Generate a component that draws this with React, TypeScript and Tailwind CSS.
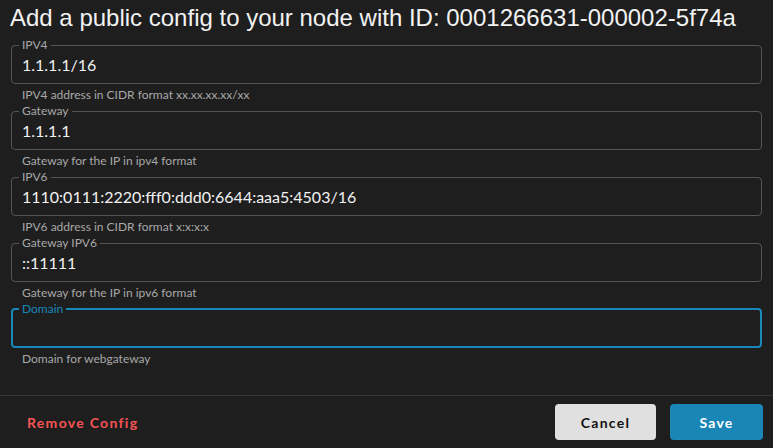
const fields = [
  { label: 'IPV4', value: '1.1.1.1/16', help: 'IPV4 address in CIDR format xx.xx.xx.xx/xx' },
  { label: 'Gateway', value: '1.1.1.1', help: 'Gateway for the IP in ipv4 format' },
  { label: 'IPV6', value: '1110:0111:2220:fff0:ddd0:6644:aaa5:4503/16', help: 'IPV6 address in CIDR format x:x:x:x' },
  { label: 'Gateway IPV6', value: '::11111', help: 'Gateway for the IP in ipv6 format' },
  { label: 'Domain', value: '', help: 'Domain for webgateway', focused: true },
]

function Field({ label, value, help, focused }: { label: string; value: string; help: string; focused?: boolean }) {
  return (
    <div className="mb-[3px]">
      <fieldset
        className={`rounded-[4px] ${
          focused ? 'border-2 border-[#1a87b9] px-[9px] pb-[7px]' : 'border border-[#555555] px-[10px] pb-[8px]'
        }`}>
        <legend
          className={`ml-[-3px] px-[3px] text-[12px] leading-[12px] ${focused ? 'text-[#1a87b9]' : 'text-[#a8a8a8]'}`}>
          {label}
        </legend>
        <input
          defaultValue={value}
          autoFocus={focused}
          className="mt-[4px] block h-[20px] w-full bg-transparent text-[16px] leading-[20px] text-[#f2f2f2] outline-none"
        />
      </fieldset>
      <div className="mt-[4px] pl-[11px] text-[12px] leading-[14px] text-[#a8a8a8]">{help}</div>
    </div>
  )
}

export default function App() {
  return (
    <div className="flex h-[448px] w-[773px] flex-col bg-[#1e1e1e] font-['Lato','Noto_Sans',sans-serif]">
      <h1 className="h-[39px] pl-[10px] pt-[4px] font-['Liberation_Sans',Arial,sans-serif] text-[24px] leading-[28px] text-[#f2f2f2]">
        Add a public config to your node with ID: 0001266631-000002-5f74a
      </h1>

      <div className="flex-1 px-[11px]">
        {fields.map(f => (
          <Field key={f.label} {...f} />
        ))}
      </div>

      <div className="flex h-[53px] items-center border-t border-[#383838] pl-[27px] pr-[10px]">
        <button className="text-[14px] font-bold tracking-[1.3px] text-[#f55454]">Remove Config</button>
        <div className="ml-auto flex gap-[14px]">
          <button className="h-[36px] w-[101px] rounded-[4px] bg-[#e0e0e0] text-[14px] font-bold tracking-[1.25px] text-[#111111]">
            Cancel
          </button>
          <button className="h-[36px] w-[93px] rounded-[4px] bg-[#1a86b6] text-[14px] font-bold tracking-[1.25px] text-white">
            Save
          </button>
        </div>
      </div>
    </div>
  )
}
